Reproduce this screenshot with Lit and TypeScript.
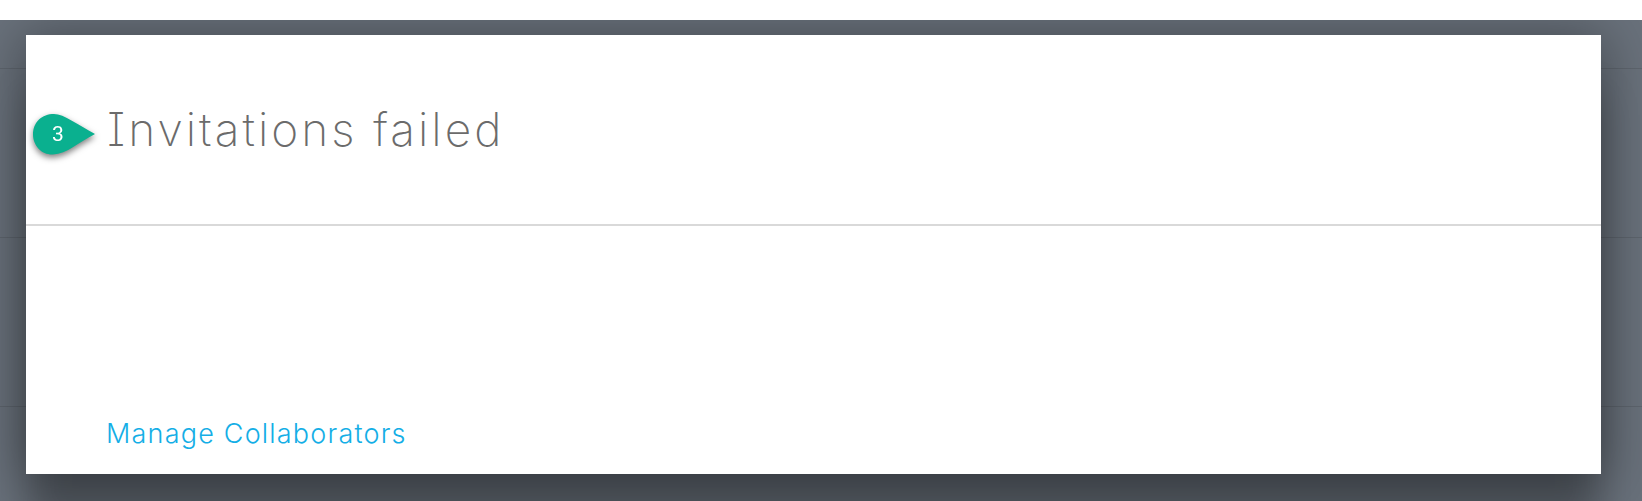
import { LitElement, html, css } from "lit";
import { customElement } from "lit/decorators.js";

@customElement("app-root")
export class AppRoot extends LitElement {
  static styles = css`
    :host { display: block; height: 501px; background: #fff; overflow: hidden; font-family: Inter, "Noto Sans", sans-serif; font-feature-settings: "cv08" 1; }
    .backdrop { position: relative; height: 481px; margin-top: 20px; background: #69717b; overflow: hidden; }
    .row { height: 169px; border-bottom: 1px solid rgba(0,0,0,.1); box-sizing: border-box; }
    .row.first { height: 49px; }
    .modal { position: absolute; left: 26px; top: 15px; width: 1575px; height: 439px; background: #fff; display: flex; flex-direction: column; box-shadow: 0 4px 50px 4px rgba(0,0,0,.36), 0 60px 36px -2px rgba(0,0,0,.25); }
    .head { height: 191px; box-sizing: border-box; border-bottom: 2px solid #d9d9d9; padding: 62px 0 0 81px; }
    h1 { margin: 0; font-size: 46px; line-height: 64px; font-weight: 250; color: #6b6b6b; letter-spacing: 3px; }
    .body { flex: 1; display: flex; align-items: flex-end; padding: 0 0 22px 80px; }
    a { font-size: 27px; line-height: 36px; font-weight: 280; color: #14aee6; text-decoration: none; letter-spacing: 1.2px; }
    .badge { position: absolute; left: 7px; top: 79px; width: 62px; height: 41px; filter: drop-shadow(0 3px 3px rgba(0,0,0,.5)); }
    .badge svg { display: block; }
    .num { position: absolute; left: 14px; top: 8px; width: 22px; text-align: center; font: 400 21px/24px Roboto, sans-serif; color: #fff; }
  `;
  render() {
    return html`<div class="backdrop">
      <div class="row first"></div><div class="row"></div><div class="row"></div>
      <div class="modal">
        <div class="head"><h1>Invitations failed</h1></div>
        <div class="body"><a href="#">Manage Collaborators</a></div>
        <div class="badge">
          <svg width="62" height="41" viewBox="0 0 62 41"><path fill="#0ab08f" d="M0 20.5C0 8 9 0 21 0C31 0 45 11 62 20C46 28 34 40 20 40.5C9 41 0 32 0 20.5Z"/></svg>
          <span class="num">3</span>
        </div>
      </div>
    </div>`;
  }
}
